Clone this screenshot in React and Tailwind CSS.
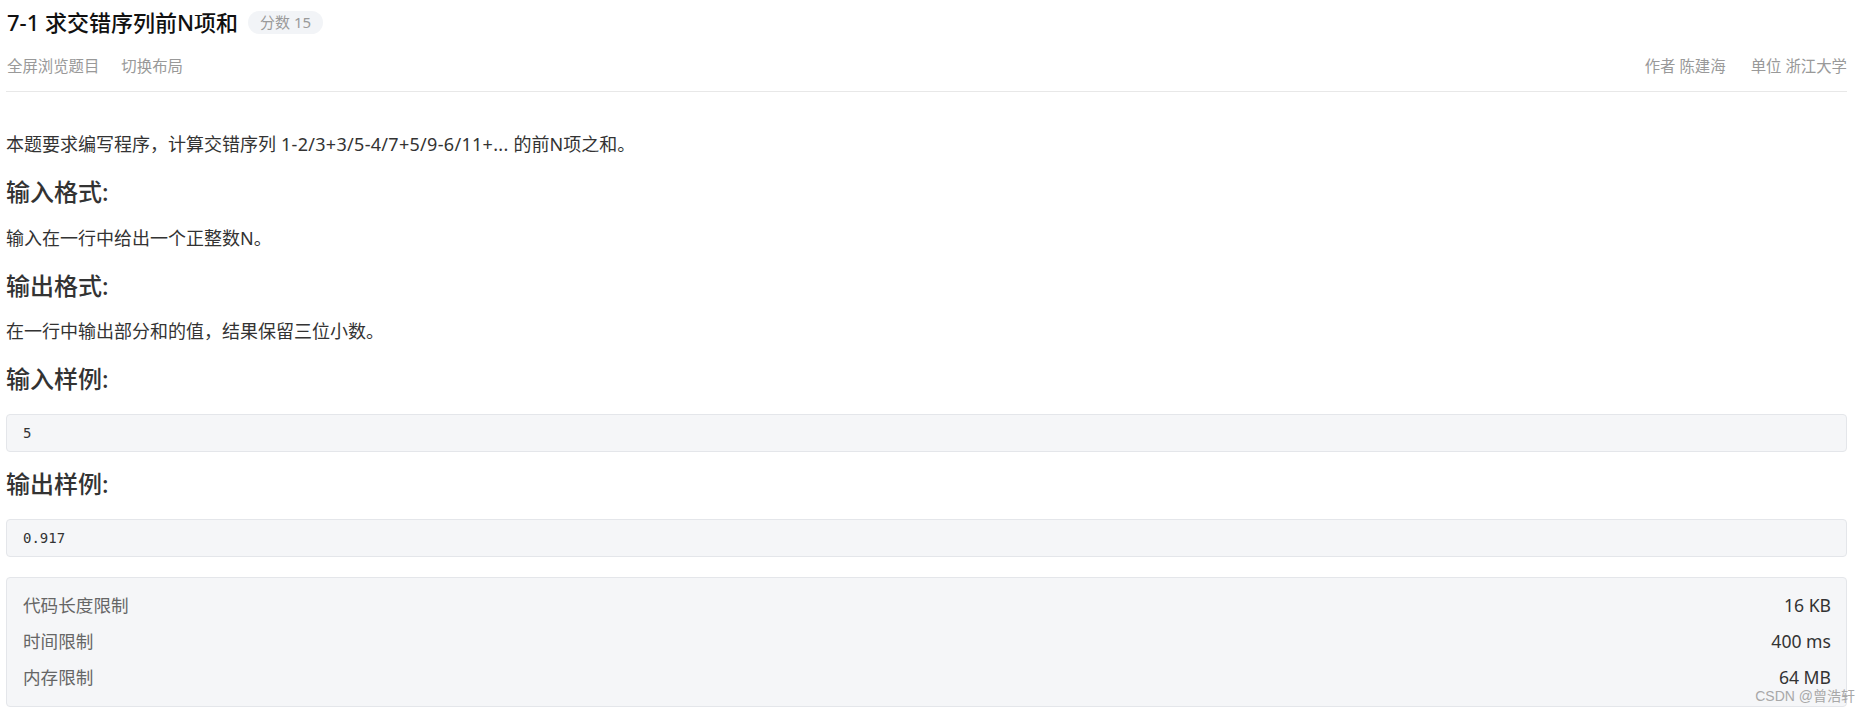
export default function App() {
  const font = { fontFamily: '"Noto Sans", "Noto Sans CJK SC", sans-serif' };
  return (
    <div className="relative w-[1870px] h-[714px] bg-white overflow-hidden pl-[6px] pr-[23px]" style={font}>
      {/* header */}
      <div className="border-b border-[#e8e8e8] pb-[13px]">
        <div className="flex items-center pt-[6px] h-[38px]">
          <h1 className="pl-[1px] text-[22px] leading-[32px] font-medium text-[#111]">7-1 求交错序列前N项和</h1>
          <span className="ml-[10px] h-[23px] px-[12px] rounded-full bg-[#f2f4f7] text-[#9a9a9a] text-[15px] leading-[23px]">分数 15</span>
        </div>
        <div className="flex justify-between items-center mt-[18px] h-[22px] text-[15.4px] leading-[22px] text-[#999]">
          <div className="flex gap-[22px] pl-[1px]">
            <span>全屏浏览题目</span>
            <span>切换布局</span>
          </div>
          <div className="flex gap-[25px]">
            <span>作者 陈建海</span>
            <span>单位 浙江大学</span>
          </div>
        </div>
      </div>

      {/* body */}
      <div className="text-[#333]">
        <p className="mt-[39px] text-[18px] leading-[26px]">本题要求编写程序，计算交错序列<span className="tracking-[0.3px]"> 1-2/3+3/5-4/7+5/9-6/11+... </span>的前N项之和。</p>
        <h3 className="mt-[18px] text-[24px] leading-[34px] font-medium">输入格式:</h3>
        <p className="mt-[16px] text-[18px] leading-[26px]">输入在一行中给出一个正整数N。</p>
        <h3 className="mt-[18px] text-[24px] leading-[34px] font-medium">输出格式:</h3>
        <p className="mt-[15px] text-[18px] leading-[26px]">在一行中输出部分和的值，结果保留三位小数。</p>
        <h3 className="mt-[18px] text-[24px] leading-[34px] font-medium">输入样例:</h3>
        <pre className="mt-[18px] h-[38px] rounded-[4px] border border-[#e4e6ea] bg-[#f5f6f8] px-[16px] py-[8px] text-[14px] leading-[20px] text-[#333]" style={{ fontFamily: '"DejaVu Sans Mono", "Liberation Mono", monospace' }}>5</pre>
        <h3 className="mt-[15px] text-[24px] leading-[34px] font-medium">输出样例:</h3>
        <pre className="mt-[18px] h-[38px] rounded-[4px] border border-[#e4e6ea] bg-[#f5f6f8] px-[16px] py-[8px] text-[14px] leading-[20px] text-[#333]" style={{ fontFamily: '"DejaVu Sans Mono", "Liberation Mono", monospace' }}>0.917</pre>
        <div className="mt-[20px] rounded-[4px] border border-[#e4e6ea] bg-[#f5f6f8] pl-[16px] pr-[15px] pt-[9px] pb-[11px] text-[17.6px] leading-[36px]">
          <div className="flex justify-between"><span className="text-[#666]">代码长度限制</span><span className="text-[#333]">16 KB</span></div>
          <div className="flex justify-between"><span className="text-[#666]">时间限制</span><span className="text-[#333]">400 ms</span></div>
          <div className="flex justify-between"><span className="text-[#666]">内存限制</span><span className="text-[#333]">64 MB</span></div>
        </div>
      </div>

      <div className="absolute right-[15px] bottom-[9px] text-[14px] leading-[18px] text-[#a8a8a8]" style={{ fontFamily: '"Liberation Sans", "Noto Sans CJK SC", sans-serif' }}>CSDN @曾浩轩</div>
    </div>
  );
}
